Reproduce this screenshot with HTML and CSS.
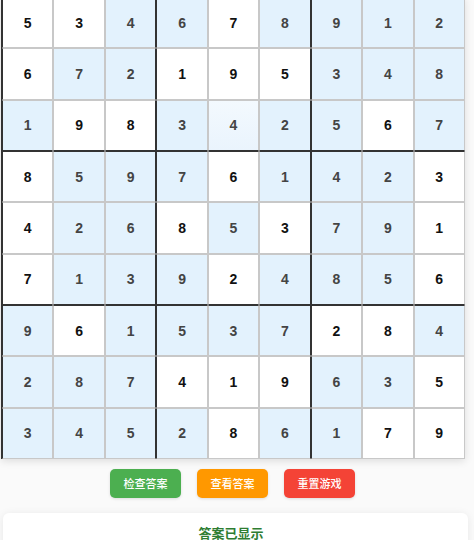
FILE: index.html
```html
<!DOCTYPE html>
<html lang="zh-CN">
<head>
<meta charset="utf-8">
<title>数独</title>
<link rel="stylesheet" href="styles.css">
</head>
<body>
<div class="page">
  <div class="board">
    <div class="c g">5</div><div class="c g">3</div><div class="c f">4</div><div class="c f">6</div><div class="c g">7</div><div class="c f">8</div><div class="c f">9</div><div class="c f">1</div><div class="c f">2</div>
    <div class="c g">6</div><div class="c f">7</div><div class="c f">2</div><div class="c g">1</div><div class="c g">9</div><div class="c g">5</div><div class="c f">3</div><div class="c f">4</div><div class="c f">8</div>
    <div class="c f">1</div><div class="c g">9</div><div class="c g">8</div><div class="c f">3</div><div class="c f sel">4</div><div class="c f">2</div><div class="c f">5</div><div class="c g">6</div><div class="c f">7</div>
    <div class="c g">8</div><div class="c f">5</div><div class="c f">9</div><div class="c f">7</div><div class="c g">6</div><div class="c f">1</div><div class="c f">4</div><div class="c f">2</div><div class="c g">3</div>
    <div class="c g">4</div><div class="c f">2</div><div class="c f">6</div><div class="c g">8</div><div class="c f">5</div><div class="c g">3</div><div class="c f">7</div><div class="c f">9</div><div class="c g">1</div>
    <div class="c g">7</div><div class="c f">1</div><div class="c f">3</div><div class="c f">9</div><div class="c g">2</div><div class="c f">4</div><div class="c f">8</div><div class="c f">5</div><div class="c g">6</div>
    <div class="c f">9</div><div class="c g">6</div><div class="c f">1</div><div class="c f">5</div><div class="c f">3</div><div class="c f">7</div><div class="c g">2</div><div class="c g">8</div><div class="c f">4</div>
    <div class="c f">2</div><div class="c f">8</div><div class="c f">7</div><div class="c g">4</div><div class="c g">1</div><div class="c g">9</div><div class="c f">6</div><div class="c f">3</div><div class="c g">5</div>
    <div class="c f">3</div><div class="c f">4</div><div class="c f">5</div><div class="c f">2</div><div class="c g">8</div><div class="c f">6</div><div class="c f">1</div><div class="c g">7</div><div class="c g">9</div>
  </div>
  <div class="controls">
    <button class="btn btn-check">检查答案</button>
    <button class="btn btn-show">查看答案</button>
    <button class="btn btn-reset">重置游戏</button>
  </div>
  <div class="status">答案已显示</div>
</div>
</body>
</html>
```
FILE: styles.css
```css
html, body {
  margin: 0;
  padding: 0;
  background: #fafafa;
  font-family: "Liberation Sans", Arial, "Noto Sans CJK SC", sans-serif;
}

.page {
  width: 474px;
  height: 540px;
  overflow: hidden;
}

.board {
  margin: -3px 0 0 1px;
  width: 463px;
  display: grid;
  grid-template-columns: repeat(9, 1fr);
  grid-template-rows: repeat(9, 51.33px);
  border-left: 1px solid #333;
  background: #fff;
  box-shadow: 0 2px 8px rgba(0, 0, 0, 0.12);
}

.c {
  box-sizing: border-box;
  border: 1px solid #c8c8c8;
  display: flex;
  align-items: center;
  justify-content: center;
  font-size: 14px;
  font-weight: bold;
}

.c.g {
  background: #fff;
  color: #111;
}

.c.f {
  background: #e3f2fd;
  color: #444;
}

.c.sel {
  background: linear-gradient(#f3f9fe, #eaf4fd);
}

.c:nth-child(9n+1) { border-left-color: #333; }
.c:nth-child(9n+3),
.c:nth-child(9n+6) { border-right-color: #333; }
.c:nth-child(9n+4),
.c:nth-child(9n+7) { border-left-color: #333; }

.c:nth-child(n+19):nth-child(-n+27),
.c:nth-child(n+46):nth-child(-n+54) { border-bottom-color: #333; }
.c:nth-child(n+28):nth-child(-n+36),
.c:nth-child(n+55):nth-child(-n+63) { border-top-color: #333; }

.controls {
  width: 463px;
  margin-left: 1px;
  display: flex;
  justify-content: center;
  gap: 16px;
  padding: 10px 0 15px;
}

.btn {
  width: 71px;
  height: 29px;
  border: none;
  border-radius: 5px;
  color: #fff;
  font-family: "Noto Sans CJK SC", sans-serif;
  font-size: 11px;
  font-weight: 500;
  padding: 0;
  box-shadow: 0 1px 3px rgba(0, 0, 0, 0.12);
}

.btn-check { background: #4caf50; }
.btn-show { background: #ff9800; }
.btn-reset { background: #f44336; }

.status {
  margin: 0 6px 0 3px;
  padding: 10px 9px 10px 0;
  background: #fff;
  border-radius: 6px;
  box-shadow: 0 1px 8px rgba(0, 0, 0, 0.08);
  text-align: center;
  color: #2e7d32;
  font-family: "Noto Sans CJK SC", sans-serif;
  font-size: 13px;
  font-weight: bold;
  line-height: 20px;
}
```
